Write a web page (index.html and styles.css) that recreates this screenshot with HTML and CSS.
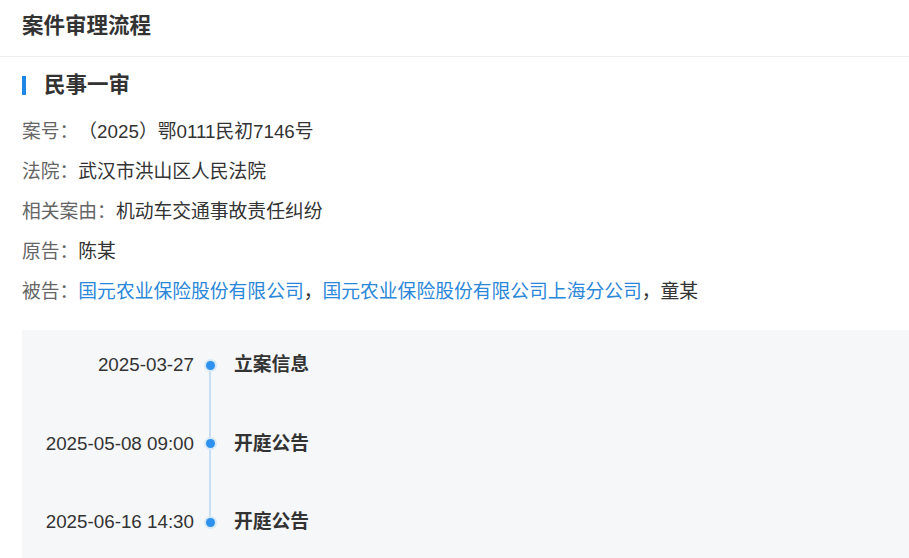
FILE: index.html
```html
<!DOCTYPE html>
<html lang="zh-CN">
<head>
<meta charset="utf-8">
<title>案件审理流程</title>
<link rel="stylesheet" href="styles.css">
</head>
<body>
<div class="page">
  <div class="header"><h1 class="header-title">案件审理流程</h1></div>
  <div class="section">
    <h2 class="section-title">民事一审</h2>
    <div class="info">
      <div class="info-row"><span class="label">案号：</span><span class="value">（2025）鄂0111民初7146号</span></div>
      <div class="info-row"><span class="label">法院：</span><span class="value">武汉市洪山区人民法院</span></div>
      <div class="info-row"><span class="label">相关案由：</span><span class="value">机动车交通事故责任纠纷</span></div>
      <div class="info-row"><span class="label">原告：</span><span class="value">陈某</span></div>
      <div class="info-row"><span class="label">被告：</span><span class="value"><a class="link">国元农业保险股份有限公司</a>，<a class="link">国元农业保险股份有限公司上海分公司</a>，童某</span></div>
    </div>
    <div class="timeline">
      <div class="tl-item">
        <div class="tl-date">2025-03-27</div>
        <div class="tl-node"><span class="tl-dot"></span></div>
        <div class="tl-title">立案信息</div>
      </div>
      <div class="tl-item">
        <div class="tl-date">2025-05-08 09:00</div>
        <div class="tl-node"><span class="tl-dot"></span></div>
        <div class="tl-title">开庭公告</div>
      </div>
      <div class="tl-item last">
        <div class="tl-date">2025-06-16 14:30</div>
        <div class="tl-node"><span class="tl-dot"></span></div>
        <div class="tl-title">开庭公告</div>
      </div>
    </div>
  </div>
</div>
</body>
</html>
```
FILE: styles.css
```css
html, body {
  margin: 0;
  padding: 0;
  background: #ffffff;
}
body {
  font-family: "Liberation Sans", "Noto Sans CJK SC", sans-serif;
  color: #333333;
  overflow: hidden;
  text-spacing-trim: space-all;
}
.page {
  width: 909px;
}
.header {
  height: 56px;
  border-bottom: 1px solid #eeeeee;
  padding: 0 22px;
  display: flex;
  align-items: center;
}
.header-title {
  margin: 0;
  margin-top: -4px;
  font-size: 21.5px;
  font-weight: bold;
  color: #333333;
  line-height: 30px;
}
.section {
  padding: 0 0 0 22px;
}
.section-title {
  margin: 0;
  margin-top: 13px;
  height: 30px;
  line-height: 30px;
  font-size: 21.5px;
  font-weight: bold;
  color: #333333;
  display: flex;
  align-items: center;
}
.section-title::before {
  content: "";
  display: block;
  width: 4px;
  height: 19px;
  background: #1e88e5;
  margin-right: 18px;
}
.info {
  margin-top: 12px;
}
.info-row {
  height: 40px;
  line-height: 40px;
  font-size: 18.8px;
  white-space: nowrap;
}
.label {
  color: #666666;
}
.value {
  color: #333333;
}
.link {
  color: #2b87d8;
  text-decoration: none;
}
.timeline {
  margin-top: 18px;
  background: #f6f7f9;
  padding: 23px 0 30px 0;
}
.tl-item {
  display: flex;
  align-items: center;
  height: 24px;
  margin-bottom: 54.5px;
  font-size: 18.8px;
  line-height: 24px;
}
.tl-item.last {
  margin-bottom: 0;
}
.tl-date {
  width: 172px;
  text-align: right;
  color: #333333;
}
.tl-node {
  width: 32px;
  height: 24px;
  position: relative;
  display: flex;
  align-items: center;
  justify-content: center;
}
.tl-node::after {
  content: "";
  position: absolute;
  left: 15px;
  top: 12px;
  width: 2px;
  height: 78.5px;
  background: #c7e0f6;
  z-index: 0;
}
.tl-item.last .tl-node::after {
  display: none;
}
.tl-dot {
  position: relative;
  z-index: 1;
  width: 9px;
  height: 9px;
  border-radius: 50%;
  background: #2f91ee;
  box-shadow: 0 0 0 2px #d6e9fb;
}
.tl-title {
  padding-left: 8px;
  font-weight: bold;
  color: #333333;
}
```
